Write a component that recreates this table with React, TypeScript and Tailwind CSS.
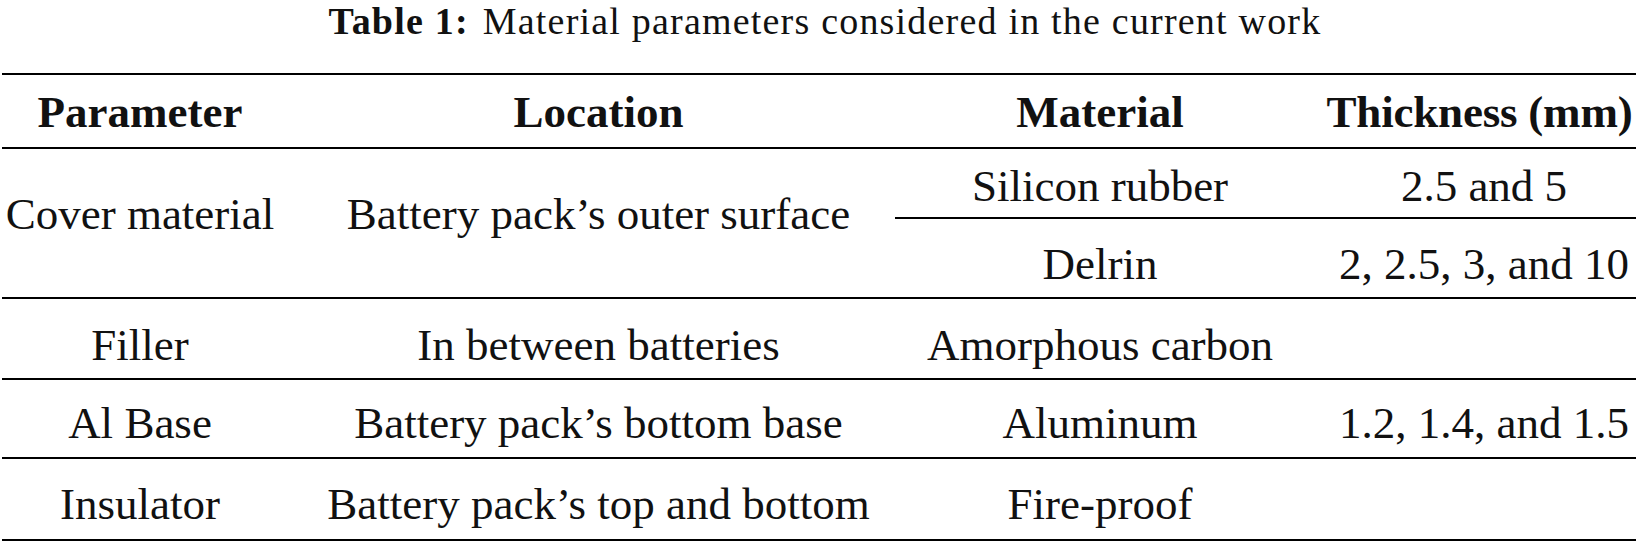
const cols = ["w-[276px]", "w-[617px] pl-[24px]", "w-[410px]", "w-[331px] pl-[27px]"]

type RowProps = { cells: string[]; h: string; pt: string; bold?: boolean }

function Row({ cells, h, pt, bold }: RowProps) {
  return (
    <div className={`flex border-b-2 border-black ${h}`}>
      {cells.map((c, i) => (
        <div
          key={i}
          className={`${cols[i]} ${pt} text-center whitespace-nowrap ${bold ? "font-bold" : ""} ${bold && i === 3 ? "!pl-[18px] tracking-[-0.2px]" : ""}`}
        >
          {c}
        </div>
      ))}
    </div>
  )
}

export default function App() {
  return (
    <div
      className="w-[1639px] h-[543px] bg-white text-[#111] overflow-hidden"
      style={{ fontFamily: '"Liberation Serif", "Times New Roman", serif' }}
    >
      {/* Caption */}
      <p className="h-[40px] pt-[2px] pl-[11px] text-center text-[38px] leading-[38px] tracking-[1.2px]">
        <span className="font-bold">Table 1:</span>
        <span className="ml-[14px]">Material parameters considered in the current work</span>
      </p>

      {/* Table */}
      <div className="mt-[33px] ml-[2px] w-[1634px] border-t-2 border-black text-[45px] leading-[45px]">
        <Row h="h-[74px]" pt="pt-[15px]" bold cells={["Parameter", "Location", "Material", "Thickness (mm)"]} />

        {/* Cover material block */}
        <div className="flex h-[150px] border-b-2 border-black">
          <div className={`${cols[0]} pt-[43px] text-center whitespace-nowrap`}>Cover material</div>
          <div className={`${cols[1]} pt-[43px] text-center whitespace-nowrap`}>Battery pack’s outer surface</div>
          <div className="flex flex-col">
            <div className="flex h-[70px] border-b-2 border-black">
              <div className={`${cols[2]} pt-[15px] text-center whitespace-nowrap`}>Silicon rubber</div>
              <div className={`${cols[3]} pt-[15px] text-center whitespace-nowrap`}>2.5 and 5</div>
            </div>
            <div className="flex h-[78px]">
              <div className={`${cols[2]} pt-[23px] text-center whitespace-nowrap`}>Delrin</div>
              <div className={`${cols[3]} pt-[23px] text-center whitespace-nowrap`}>2, 2.5, 3, and 10</div>
            </div>
          </div>
        </div>

        <Row h="h-[81px]" pt="pt-[24px]" cells={["Filler", "In between batteries", "Amorphous carbon", ""]} />
        <Row h="h-[79px]" pt="pt-[21px]" cells={["Al Base", "Battery pack’s bottom base", "Aluminum", "1.2, 1.4, and 1.5"]} />
        <Row h="h-[82px]" pt="pt-[23px]" cells={["Insulator", "Battery pack’s top and bottom", "Fire-proof", ""]} />
      </div>
    </div>
  )
}
